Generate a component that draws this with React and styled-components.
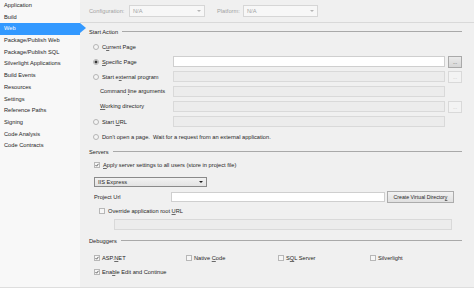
import React from 'react'
import styled, { createGlobalStyle } from 'styled-components'

const GlobalStyle = createGlobalStyle`
  html, body {
    margin: 0;
    padding: 0;
    background: #ffffff;
  }
  body {
    font-family: "Liberation Sans", Arial, sans-serif;
    font-size: 5.7px;
    color: #262626;
  }
  u {
    text-decoration-thickness: 0.5px;
    text-decoration-color: #6a6a6a;
    text-underline-offset: 0.8px;
  }
`;

const pages = [
    'Application', 'Build', 'Web', 'Package/Publish Web', 'Package/Publish SQL',
    'Silverlight Applications', 'Build Events', 'Resources', 'Settings',
    'Reference Paths', 'Signing', 'Code Analysis', 'Code Contracts',
]

const Window = styled.div`
  width: 474px;
  height: 287px;
  display: flex;
  background: #f0f0f0;
  border-bottom: 1px solid #dedede;
  overflow: hidden;
`;

const Sidebar = styled.div`
  width: 80px;
  flex-shrink: 0;
  background: #f8f8f8;
  display: flex;
  flex-direction: column;
  position: relative;
  z-index: 1;
`;

const NavItem = styled.div`
  height: 11.7px;
  line-height: 11.7px;
  padding-left: 4px;
  position: relative;
  white-space: nowrap;
  background: ${p => (p.$active ? '#3399ff' : 'transparent')};
  color: ${p => (p.$active ? '#ffffff' : '#262626')};
  &::after {
    content: '';
    display: ${p => (p.$active ? 'block' : 'none')};
    position: absolute;
    left: 100%;
    top: 0;
    border-left: 6px solid #3399ff;
    border-top: 5.85px solid transparent;
    border-bottom: 5.85px solid transparent;
  }
`;

const Main = styled.div`
  flex: 1;
  display: flex;
  flex-direction: column;
`;

const TopBar = styled.div`
  height: 22px;
  border-bottom: 1px solid #d9d9d9;
  display: flex;
  align-items: center;
  padding-left: 9px;
  color: #a3a3a3;
`;

const TopLabel = styled.span`
  width: ${p => p.$w}px;
`;

const Combo = styled.div`
  width: ${p => p.$w}px;
  height: ${p => p.$h || 12}px;
  box-sizing: border-box;
  border: 1px solid ${p => (p.$dark ? '#8a8a8a' : '#d6d6d6')};
  background: ${p => (p.$dark ? 'linear-gradient(#f2f2f2, #e3e3e3)' : '#f7f7f7')};
  color: ${p => (p.$dark ? '#262626' : '#a3a3a3')};
  display: flex;
  align-items: center;
  justify-content: space-between;
  padding: 0 3px;
  margin-right: ${p => p.$mr || 0}px;
  &::after {
    content: '';
    border-top: 2.5px solid ${p => (p.$dark ? '#1e1e1e' : '#b5b5b5')};
    border-left: 2px solid transparent;
    border-right: 2px solid transparent;
  }
`;

const Body = styled.div`
  padding: 4px 14px 0 9px;
  display: flex;
  flex-direction: column;
`;

const SectionHead = styled.div`
  height: 9px;
  display: flex;
  align-items: center;
  gap: 4px;
  margin-top: ${p => p.$mt || 0}px;
  &::after {
    content: '';
    flex: 1;
    height: 1px;
    background: #a9a9a9;
  }
`;

const StartGrid = styled.div`
  margin: 5px 0 0 4px;
  display: grid;
  grid-template-columns: 77px 272px 14px;
  grid-auto-rows: 11px;
  column-gap: 3px;
  row-gap: 4px;
`;

const Choice = styled.label`
  display: flex;
  align-items: center;
  gap: ${p => p.$gap || 3}px;
  white-space: nowrap;
  padding-left: ${p => p.$indent || 0}px;
  grid-column: ${p => (p.$wide ? '1 / -1' : 'auto')};
  margin-top: ${p => p.$mt || 0}px;
  height: ${p => p.$h || 11}px;
`;

const Text = styled.span`
  white-space: pre;
`;

const SubLabel = styled.span`
  display: block;
  line-height: 11px;
  padding-left: ${p => (p.$flush ? 0 : 7)}px;
  width: ${p => (p.$w ? `${p.$w}px` : 'auto')};
  flex-shrink: 0;
  white-space: nowrap;
`;

const Radio = styled.span`
  width: 6px;
  height: 6px;
  box-sizing: border-box;
  border-radius: 50%;
  border: 1px solid #b4b4b4;
  background: ${p => (p.$on ? 'radial-gradient(circle, #333 0 1.4px, #f4f4f4 1.7px)' : '#f4f4f4')};
  flex-shrink: 0;
`;

const Box = styled.span`
  width: 6px;
  height: 6px;
  box-sizing: border-box;
  border: 1px solid #b7b7b7;
  background: #f6f6f6;
  flex-shrink: 0;
  display: flex;
  align-items: center;
  justify-content: center;
`;

const TextBox = styled.div`
  box-sizing: border-box;
  height: ${p => p.$h || 11}px;
  width: ${p => (p.$w ? `${p.$w}px` : 'auto')};
  border: 1px solid ${p => (p.$on ? '#cfcfcf' : '#d9d9d9')};
  background: ${p => (p.$on ? '#ffffff' : '#ececec')};
  margin-left: ${p => p.$ml || 0}px;
  margin-top: ${p => p.$mt || 0}px;
  align-self: center;
`;

const Dots = styled.div`
  box-sizing: border-box;
  height: 12px;
  width: 14px;
  align-self: start;
  border: 1px solid ${p => (p.$on ? '#a9a9a9' : '#d9d9d9')};
  background: ${p => (p.$on ? 'linear-gradient(#eaeaea, #d6d6d6)' : '#f3f3f3')};
  color: ${p => (p.$on ? '#444' : '#bbb')};
  display: flex;
  align-items: center;
  justify-content: center;
  font-size: 5px;
  line-height: 1;
`;

const Servers = styled.div`
  padding-left: 5px;
  display: flex;
  flex-direction: column;
`;

const UrlRow = styled.div`
  margin-top: 4px;
  height: 12px;
  display: flex;
  align-items: center;
`;

const Button = styled.div`
  box-sizing: border-box;
  height: 12px;
  margin-left: 2px;
  width: 67px;
  border: 1px solid #acacac;
  background: linear-gradient(#f2f2f2, #e0e0e0);
  display: flex;
  align-items: center;
  justify-content: center;
  white-space: nowrap;
  font-size: 5.2px;
`;

const DebugGrid = styled.div`
  margin: 8px 0 0 5px;
  display: grid;
  grid-template-columns: repeat(4, 92px);
  grid-auto-rows: 10px;
  row-gap: 4px;
`;

const Check = () => (
    <svg width="4" height="4" viewBox="0 0 8 8">
        <path d="M1 4.2 L3.2 6.4 L7 1.6" fill="none" stroke="#3a3a3a" strokeWidth="1.6" />
    </svg>
)

const App = () => {
    return (
        <>
            <GlobalStyle />
            <Window>
                <Sidebar>
                    {pages.map((p) => (
                        <NavItem key={p} $active={p === 'Web'}>{p}</NavItem>
                    ))}
                </Sidebar>
                <Main>
                    <TopBar>
                        <TopLabel $w={40}>Configuration:</TopLabel>
                        <Combo $w={76} $mr={12}>N/A</Combo>
                        <TopLabel $w={26}>Platform:</TopLabel>
                        <Combo $w={75}>N/A</Combo>
                    </TopBar>
                    <Body>
                        <SectionHead>Start Action</SectionHead>
                        <StartGrid>
                            <Choice $wide><Radio /><Text>C<u>u</u>rrent Page</Text></Choice>
                            <Choice><Radio $on /><Text><u>S</u>pecific Page</Text></Choice>
                            <TextBox $on />
                            <Dots $on>...</Dots>
                            <Choice><Radio /><Text>Start e<u>x</u>ternal program</Text></Choice>
                            <TextBox />
                            <Dots>...</Dots>
                            <SubLabel>Command <u>l</u>ine arguments</SubLabel>
                            <TextBox />
                            <span />
                            <SubLabel><u>W</u>orking directory</SubLabel>
                            <TextBox />
                            <Dots>...</Dots>
                            <Choice><Radio /><Text>Start <u>U</u>RL</Text></Choice>
                            <TextBox />
                            <span />
                            <Choice $wide><Radio /><Text>Don't open a page.  Wait for a request from an external application.</Text></Choice>
                        </StartGrid>

                        <SectionHead $mt={5}>Servers</SectionHead>
                        <Servers>
                            <Choice $mt={4} $h={10}><Box><Check /></Box><Text><u>A</u>pply server settings to all users (store in project file)</Text></Choice>
                            <Combo $w={113} $h={10} $dark style={{ marginTop: 7 }}>IIS Express</Combo>
                            <UrlRow>
                                <SubLabel $flush $w={77}>Project Url</SubLabel>
                                <TextBox $on $w={214} $h={10} />
                                <Button><Text>Create Virtual Director<u>y</u></Text></Button>
                            </UrlRow>
                            <Choice $indent={5} $mt={3} $h={10}><Box /><Text>Override application root <u>U</u>RL</Text></Choice>
                            <TextBox $ml={10} $w={338} $mt={3} />
                        </Servers>

                        <SectionHead $mt={6}>Debuggers</SectionHead>
                        <DebugGrid>
                            <Choice $gap={2} $h={10}><Box><Check /></Box><Text>ASP.<u>N</u>ET</Text></Choice>
                            <Choice $gap={2} $h={10}><Box /><Text>Native <u>C</u>ode</Text></Choice>
                            <Choice $gap={2} $h={10}><Box /><Text>S<u>Q</u>L Server</Text></Choice>
                            <Choice $gap={2} $h={10}><Box /><Text>Silverlight</Text></Choice>
                            <Choice $gap={2} $h={10} $wide><Box><Check /></Box><Text>Ena<u>b</u>le Edit and Continue</Text></Choice>
                        </DebugGrid>
                    </Body>
                </Main>
            </Window>
        </>
    )
}

export default App
